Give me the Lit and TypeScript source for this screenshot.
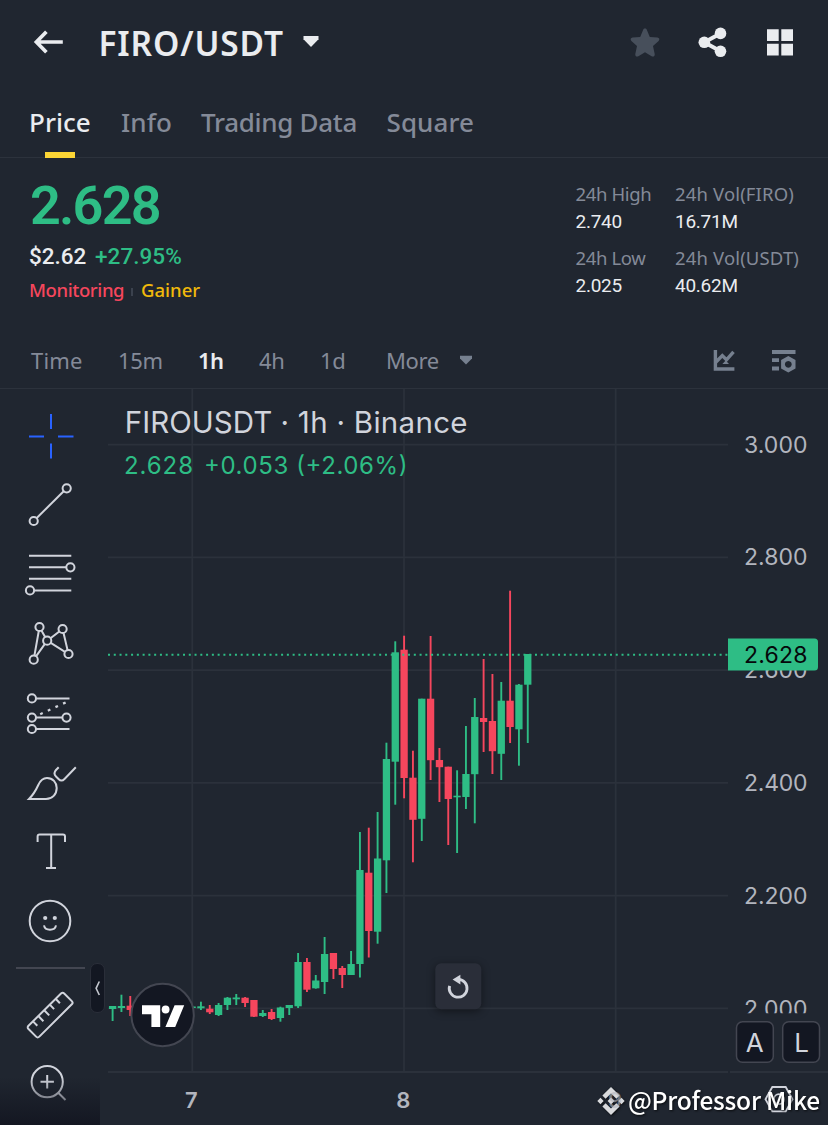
import { LitElement, html, svg, css } from "lit";
import { customElement } from "lit/decorators.js";

type Candle = [slot: number, up: boolean, high: number, low: number, top: number, bottom: number];

const CANDLES: Candle[] = [
  [-33, true, 1006, 1021, 1006, 1009],
  [-32, true, 994.7, 1012, 1006, 1008],
  [-31, false, 996, 1016, 1005.7, 1010],
  [-24, true, 1006, 1009, 1006.5, 1008],
  [-23, true, 1001.7, 1010, 1006.3, 1008.3],
  [-22, false, 1005, 1014, 1008.7, 1012.3],
  [-21, true, 1003, 1016, 1005, 1015],
  [-20, true, 997, 1010, 997.7, 1005],
  [-19, true, 994, 1005, 997.5, 999.3],
  [-18, false, 997, 1007, 997.7, 1003],
  [-17, false, 1000, 1017, 1000, 1016.7],
  [-16, true, 1010, 1017, 1013, 1016],
  [-15, false, 1009, 1020, 1012, 1019],
  [-14, true, 1006.7, 1021.7, 1007.5, 1018],
  [-13, true, 1005, 1015, 1005, 1008],
  [-12, true, 953, 1008, 962, 1006.3],
  [-11, false, 958, 992, 962, 989.7],
  [-10, true, 975, 988.7, 980.5, 988.3],
  [-9, true, 937, 994, 954, 982],
  [-8, false, 953, 979, 953, 969],
  [-7, false, 966, 988, 968, 975],
  [-6, true, 951, 975, 964, 975],
  [-5, true, 832, 977.5, 870, 964],
  [-4, false, 827.7, 957.5, 872.7, 931],
  [-3, true, 812, 943.7, 858.5, 931.7],
  [-2, true, 742.7, 893, 759, 860.3],
  [-1, true, 641.3, 804.7, 652.3, 761.7],
  [0, false, 635.7, 798.3, 649.7, 778],
  [1, false, 750.7, 862.3, 777.7, 819.8],
  [2, true, 698.7, 841, 698.7, 818.8],
  [3, false, 636, 780, 698.7, 760.2],
  [4, false, 748, 802, 760, 767.2],
  [5, false, 766.7, 845, 766.7, 799],
  [6, true, 770.3, 853, 795.7, 797.3],
  [7, true, 726, 809, 774, 797],
  [8, true, 698, 823.3, 717, 774.2],
  [9, false, 659, 752, 718, 722],
  [10, false, 674, 774, 721, 751.2],
  [11, true, 682, 780, 700.7, 753.8],
  [12, false, 590.7, 743, 700.7, 727],
  [13, true, 684, 765.7, 684.7, 729.3],
  [14, true, 654, 743, 654, 684.7],
];

const SLOT = 212 / 24;
const slotX = (n: number) => 404.1 + n * SLOT;

const star = "M645 28.6 C645.9 28.6 646.5 29 646.9 29.9 L649.8 36.9 L657.4 37.5 C659.4 37.7 660 39.6 658.6 40.9 L653 46 L654.7 53.9 C655 56 653.4 57.2 651.6 56.2 L645 52.2 L638.4 56.2 C636.6 57.2 635 56 635.3 53.9 L637 46 L631.4 40.9 C630 39.6 630.6 37.7 632.6 37.5 L640.2 36.9 L643.1 29.9 C643.5 29 644.1 28.6 645 28.6 Z";

@customElement("market-header")
export class MarketHeader extends LitElement {
  static styles = css`
    :host { display: flex; align-items: center; height: 84px; }
    svg { display: block; flex: none; }
    .title { width: 192px; margin-left: 32.5px; padding-top: 2px; font: 600 33.5px/44px "Noto Sans", sans-serif; letter-spacing: 0.85px; color: #eaecef; white-space: nowrap; }
    .back { margin-left: 30px; }
    .caret { margin-left: 10.5px; }
    .actions { display: flex; margin-left: auto; margin-right: 28px; gap: 27.5px; }
  `;
  render() {
    return html`
      <svg class="back" width="36" height="30" viewBox="30 27 36 30" fill="none" stroke="#eaecef" stroke-width="3.7">
        <path d="M62.8 42H37M46.4 31.8L36.4 42L46.4 52.2" />
      </svg>
      <div class="title">FIRO/USDT</div>
      <svg class="caret" width="20" height="20" viewBox="301.5 32 20 20" fill="#eaecef">
        <path d="M304 36h15v3.2L311.5 47L304 39.2z" />
      </svg>
      <div class="actions">
        <svg width="40" height="40" viewBox="625 22 40 40"><path d=${star} fill="#474f5b" /></svg>
        <svg width="40" height="40" viewBox="692.5 22 40 40" fill="#eaecef">
          <circle cx="703.8" cy="42.3" r="5.8" /><circle cx="720" cy="33.4" r="5.8" /><circle cx="720" cy="51.3" r="5.8" />
          <path d="M720 33.4L703.8 42.3L720 51.3" fill="none" stroke="#eaecef" stroke-width="4" />
        </svg>
        <svg width="40" height="40" viewBox="760 22 40 40" fill="#eaecef">
          <path d="M767 29.3h11.7v11.7h-11.7zM781.3 29.3h11.7v11.7h-11.7zM767 43.8h11.7v11.7h-11.7zM781.3 43.8h11.7v11.7h-11.7z" />
        </svg>
      </div>
    `;
  }
}

@customElement("market-tabs")
export class MarketTabs extends LitElement {
  static styles = css`
    :host { display: flex; height: 73px; box-sizing: content-box; border-bottom: 1px solid #2c323c; }
    .tab { position: relative; padding-top: 20px; font: 500 26px/36px "Noto Sans", sans-serif; color: #848a98; white-space: nowrap; }
    .price { margin-left: 29px; width: 92px; color: #eaecef; letter-spacing: 0.05px; }
    .info { width: 80px; letter-spacing: 0.1px; }
    .data { width: 185.5px; letter-spacing: -0.3px; }
    .square { letter-spacing: 0.1px; }
    .bar { position: absolute; left: 16px; bottom: -1px; width: 30px; height: 6px; background: #fcd535; }
  `;
  render() {
    return html`
      <div class="tab price">Price<span class="bar"></span></div>
      <div class="tab info">Info</div>
      <div class="tab data">Trading Data</div>
      <div class="tab square">Square</div>
    `;
  }
}

@customElement("price-summary")
export class PriceSummary extends LitElement {
  static styles = css`
    :host { display: flex; height: 174px; font-family: "Noto Sans", sans-serif; }
    .left { padding: 18px 0 0 29px; flex: 1; white-space: nowrap; }
    .last { margin-left: 1px; font: 600 54px/60px Roboto, sans-serif; color: #2ebd85; letter-spacing: -1.8px; }
    .sub { display: flex; font: 500 22.5px/28px Roboto, sans-serif; color: #eaecef; margin-top: 6px; }
    .usd { width: 66px; }
    .up { color: #2ebd85; letter-spacing: 0.05px; }
    .tags { display: flex; align-items: center; font: 500 18.5px/26px "Noto Sans", sans-serif; margin-top: 7px; }
    .mon { width: 102px; color: #f6465d; letter-spacing: -0.4px; }
    .sep { width: 1.5px; height: 8px; margin-top: 4px; background: #3b424e; }
    .gain { margin-left: 8.5px; color: #f0b90b; }
    .stats { display: grid; grid-template-columns: 99.5px 153px; grid-template-rows: 64px 64px; padding-top: 23px; white-space: nowrap; }
    .label { font-size: 18.5px; line-height: 26px; color: #848a98; letter-spacing: -0.35px; }
    .wide .label { letter-spacing: 0.15px; }
    .value { padding-top: 1px; font: 400 19px/27px Roboto, sans-serif; color: #eaecef; letter-spacing: -0.25px; }
  `;
  private stat(label: string, value: string, group = "") {
    return html`<div class=${group}><div class="label">${label}</div><div class="value">${value}</div></div>`;
  }
  render() {
    return html`
      <div class="left">
        <div class="last">2.628</div>
        <div class="sub"><span class="usd">$2.62</span><span class="up">+27.95%</span></div>
        <div class="tags"><span class="mon">Monitoring</span><span class="sep"></span><span class="gain">Gainer</span></div>
      </div>
      <div class="stats">
        ${this.stat("24h High", "2.740")}${this.stat("24h Vol(FIRO)", "16.71M", "wide")}
        ${this.stat("24h Low", "2.025")}${this.stat("24h Vol(USDT)", "40.62M", "wide")}
      </div>
    `;
  }
}

@customElement("interval-bar")
export class IntervalBar extends LitElement {
  static styles = css`
    :host { display: flex; align-items: center; height: 56px; padding-left: 31px; border-bottom: 1px solid #2c323c; font: 400 22px/30px "Noto Sans", sans-serif; color: #848a98; white-space: nowrap; }
    svg { display: block; }
    .time { width: 87px; letter-spacing: 0.2px; }
    .m15 { width: 80px; letter-spacing: -0.3px; }
    .h1 { width: 61px; color: #eaecef; font-weight: 600; letter-spacing: -0.6px; }
    .h4 { width: 61px; letter-spacing: -0.3px; }
    .d1 { width: 66px; letter-spacing: -0.3px; }
    .more { width: 72px; letter-spacing: -0.4px; }
    .tools { display: flex; gap: 32px; margin-left: auto; margin-right: 30px; padding-top: 2px; }
  `;
  render() {
    return html`
      <span class="time">Time</span><span class="m15">15m</span><span class="h1">1h</span><span class="h4">4h</span><span class="d1">1d</span><span class="more">More</span>
      <svg width="16" height="16" viewBox="458 352 16 16" fill="#76808f"><path d="M460 355.8h12v2.6l-6 6.2l-6-6.2z" /></svg>
      <div class="tools">
        <svg width="28" height="28" viewBox="710 347 28 28" fill="none" stroke="#76808f" stroke-width="3.4">
          <path d="M715.4 350v19h19M716 362l6.3-6.4l4.2 4.2l7-8" />
          <path d="M725.7 360.5l3.3 3.4h-6.6z" fill="#76808f" stroke="none" />
        </svg>
        <svg width="28" height="28" viewBox="770 347 28 28" fill="#76808f">
          <path d="M772 350h23.5v4H772zM772 358.3h7v3.8h-7zM772 366.6h7v3.8h-7z" />
          <path fill-rule="evenodd" d="M788.3 356l7.2 4v8.4l-7.2 4.2l-7.2-4.2V360zM788.3 360.9a3.4 3.4 0 1 0 .01 0z" />
        </svg>
      </div>
    `;
  }
}

const ring = (x: number, y: number) => svg`<circle cx=${x} cy=${y} r="4.1" fill="#202630" />`;

@customElement("drawing-tools")
export class DrawingTools extends LitElement {
  static styles = css`
    :host { position: relative; display: flex; flex-direction: column; width: 100px; height: 736px; padding-top: 13px; box-sizing: border-box; }
    .tool { display: block; flex: none; fill: none; stroke: #d1d4dc; stroke-width: 2; }
    .rule { width: 69px; height: 2px; margin: 13px 0 11px 16px; background: #434651; flex: none; }
    .fade { position: absolute; left: 0; bottom: 0; width: 100px; height: 48px; background: linear-gradient(rgba(19, 22, 33, 0), rgba(19, 22, 33, 0.95)); }
    .handle { position: absolute; left: 88.5px; top: 572.5px; z-index: 2; }
  `;
  private tool(index: number, art: unknown, start = 402) {
    return html`<svg class="tool" width="100" height="69" viewBox=${`0 ${start + index * 69} 100 69`}>${art}</svg>`;
  }
  render() {
    return html`
      ${this.tool(0, svg`<path stroke="#2962ff" d="M51 414v15M51 443.5v15M29 436.5h15M58 436.5h15.5" />`)}
      ${this.tool(1, svg`<path d="M66.7 488.3L33.7 521" />${ring(66.7, 488.3)}${ring(33.7, 521)}`)}
      ${this.tool(2, svg`<path d="M29 555.7h42.3M29 567.3h42M29 578.7h42.3M29 590.4h42.3" />${ring(70.4, 567.3)}${ring(30, 590.4)}`)}
      ${this.tool(3, svg`<path d="M33.7 659.7L39.5 627L47.2 640.7L62.6 629L68.5 654L47.2 640.7Z" />${ring(39.5, 627)}${ring(62.6, 629)}${ring(47.2, 640.7)}${ring(68.5, 654)}${ring(33.7, 659.7)}`)}
      ${this.tool(4, svg`<path d="M31.9 698.4h37.6M31.9 717.6h34.6M31.9 729h37.6" /><path d="M40.2 714.2L67 701.8" stroke-dasharray="2.8 5.6" stroke-width="2.3" />${ring(31.9, 698.4)}${ring(31.9, 717.6)}${ring(66.5, 717.6)}${ring(31.9, 729)}`)}
      ${this.tool(5, svg`<path d="M29 799C33.5 794.5 36 790 38.3 785C40.3 780.5 43 778 47 778C52.7 778 56.7 782.5 56.7 788C56.7 794.3 52.3 799 46 799Z" /><path d="M58.7 767.3L56 770C54 772.3 54 774.5 56 776.5L58.5 779C60.5 781 62.5 781 64.5 779L75.8 767.3" />`)}
      ${this.tool(6, svg`<path d="M37.6 842v-5.5q0-2 2-2h23.4q2 0 2 2v5.5M51.2 834.5V868M46 868h10" />`)}
      ${this.tool(7, svg`<circle cx="50" cy="921" r="20.3" /><path d="M44 925.3c1 5.8 11 5.8 12 0" /><g fill="#d1d4dc" stroke="none"><circle cx="45.2" cy="918" r="2.1" /><circle cx="54.8" cy="918" r="2.1" /></g>`)}
      <div class="rule"></div>
      ${this.tool(0, svg`<path d="M61 993.5q1.6-1.6 3.2 0l7.6 7.6q1.6 1.6 0 3.2L39.3 1036.6q-1.6 1.6-3.2 0l-7.6-7.6q-1.6-1.6 0-3.2Z" /><path d="M55.6 998.8l4.3 4.5M49.8 1004.6l4.3 4.5M44.2 1010.2l5 5.2M38.4 1016l5 5.2M33 1021.4l4.3 4.3" />`, 980)}
      ${this.tool(1, svg`<circle cx="47.2" cy="1081.7" r="15.6" /><path d="M40.5 1081.7h13.4M47.2 1075v13.4M58.2 1092.7l7.3 7.3" />`, 980)}
      <div class="fade"></div>
      <svg class="handle" width="18" height="52" viewBox="89 961 18 52" fill="none">
        <rect x="90.5" y="962.5" width="14" height="49" rx="6.5" fill="#131722" stroke="#2a2e39" />
        <path d="M99.3 980.5L96.1 987.3L99.3 994" stroke="#c4c7cf" stroke-width="1.6" />
      </svg>
    `;
  }
}

@customElement("price-chart")
export class PriceChart extends LitElement {
  static styles = css`
    :host { display: block; width: 728px; height: 736px; }
    svg { display: block; }
    text { font-family: Inter, "Liberation Sans", sans-serif; fill: #b2b5be; }
    .name { font-size: 29.5px; fill: #d1d4dc; }
    .change { font-size: 24px; fill: #2ebd85; }
    .scale { font-size: 23px; }
    .tag { font-size: 23px; fill: #05080b; }
    .day { font-size: 22px; font-weight: 600; }
    .key { font-size: 26px; fill: #d1d4dc; }
    .author { font-family: "Noto Sans CJK SC", "Noto Sans", sans-serif; font-size: 24.5px; font-weight: 500; fill: #fff; }
    .shade { filter: drop-shadow(0 2px 4px rgba(0, 0, 0, 0.45)); }
    .mark { filter: drop-shadow(1px 1px 1px rgba(0, 0, 0, 0.7)); }
  `;
  private candle([n, up, high, low, top, bottom]: Candle) {
    const x = slotX(n);
    return svg`<g fill=${up ? "#2ebd85" : "#f6465d"}>
      <rect x=${x - 0.95} y=${high} width="1.9" height=${low - high} />
      <rect x=${x - 3.65} y=${top} width="7.3" height=${bottom - top} />
    </g>`;
  }
  private scale(value: string, baseline: number) {
    return svg`<text class="scale" x="744" y=${baseline} textLength="63.5">${value}</text>`;
  }
  render() {
    return html`<svg width="728" height="736" viewBox="100 389 728 736">
      <defs><clipPath id="scaleArea"><rect x="728" y="389" width="100" height="624.3" /></clipPath></defs>
      <g stroke="#2b313b" stroke-width="1.8" fill="none">
        <path d="M192.3 389V1072M404 389V1072M615.7 389V1072" />
        <path d="M108 444.6H728M108 557.4H728M108 670.1H728M108 782.9H728M108 895.6H728M108 1008.4H728" />
        <path d="M108 1072H728M730 1072H828" stroke-width="2" />
      </g>
      ${CANDLES.map((c) => this.candle(c))}
      <path d="M108 654.7H728" stroke="#2ebd85" stroke-width="2" stroke-dasharray="2 3.77" />
      <text class="name" x="124.8" y="432.6" textLength="147.5">FIROUSDT</text>
      <text class="name" x="280.5" y="432.6" textLength="187">· 1h · Binance</text>
      <text class="change" x="124" y="473.7" textLength="69">2.628</text>
      <text class="change" x="204" y="473.7" textLength="203.5">+0.053 (+2.06%)</text>
      <g clip-path="url(#scaleArea)">
        ${this.scale("3.000", 452.5)}${this.scale("2.800", 565.3)}${this.scale("2.600", 678.2)}
        ${this.scale("2.400", 791)}${this.scale("2.200", 903.8)}${this.scale("2.000", 1017)}
      </g>
      <path d="M728 638.5h86.5q3.5 0 3.5 3.5v25q0 3.5-3.5 3.5H728z" fill="#2ebd85" />
      <text class="tag" x="744" y="662.9" textLength="63.5">2.628</text>

      <circle cx="162.6" cy="1015" r="31.2" fill="#131722" stroke="#434651" stroke-width="2" />
      <path d="M142 1005.3h18.2v21.7h-8.8v-12.7H142zM174.6 1005.3h9.6l-9 21.7h-9.8z" fill="#fff" />
      <circle cx="165.6" cy="1009.5" r="3.9" fill="#fff" />

      <rect class="shade" x="435.3" y="963.2" width="46" height="46" rx="6" fill="#2a2e39" />
      <path d="M449.6 985.8A8.9 8.9 0 1 0 458.5 979.4" fill="none" stroke="#d1d4dc" stroke-width="2.8" />
      <path d="M452.6 979.6L460.4 974.8V984.4Z" fill="#d1d4dc" />

      <g fill="#131722" stroke="#434651" stroke-width="1.5">
        <rect x="736.5" y="1021.7" width="36.8" height="40.6" rx="6" /><rect x="782.7" y="1021.7" width="36.8" height="40.6" rx="6" />
      </g>
      <text class="key" x="754.8" y="1052" text-anchor="middle">A</text>
      <text class="key" x="801.5" y="1052" text-anchor="middle">L</text>

      <text class="day" x="191.3" y="1107.6" text-anchor="middle">7</text>
      <text class="day" x="403.2" y="1107.6" text-anchor="middle">8</text>
      <g class="mark" fill="#d9dadd">
        <path d="M611 1087l8.6 8.6l-3.2 3.2l-5.4-5.4l-5.4 5.4l-3.2-3.2zM611 1115l8.6-8.6l-3.2-3.2l-5.4 5.4l-5.4-5.4l-3.2 3.2zM600.5 1097.8l3.2 3.2l-3.2 3.2l-3.2-3.2zM621.5 1097.8l3.2 3.2l-3.2 3.2l-3.2-3.2zM611 1097.6l3.4 3.4l-3.4 3.4l-3.4-3.4z" />
      </g>
      <text class="day" x="615" y="1107.6" text-anchor="middle" fill-opacity="0.6">9</text>
      <g fill="none" stroke="#d1d4dc" stroke-width="1.8">
        <path d="M772.3 1087h13.4l6.8 12.2l-6.8 12.2h-13.4l-6.8-12.2z" /><circle cx="779" cy="1099.2" r="5" />
      </g>
      <text class="author mark" x="628" y="1109.5" textLength="192">@Professor Mike</text>
    </svg>`;
  }
}

@customElement("app-root")
export class AppRoot extends LitElement {
  static styles = css`
    :host { display: block; width: 828px; height: 1125px; overflow: hidden; background: #202630; }
    .chart { display: flex; }
  `;
  render() {
    return html`
      <market-header></market-header>
      <market-tabs></market-tabs>
      <price-summary></price-summary>
      <interval-bar></interval-bar>
      <div class="chart"><drawing-tools></drawing-tools><price-chart></price-chart></div>
    `;
  }
}
